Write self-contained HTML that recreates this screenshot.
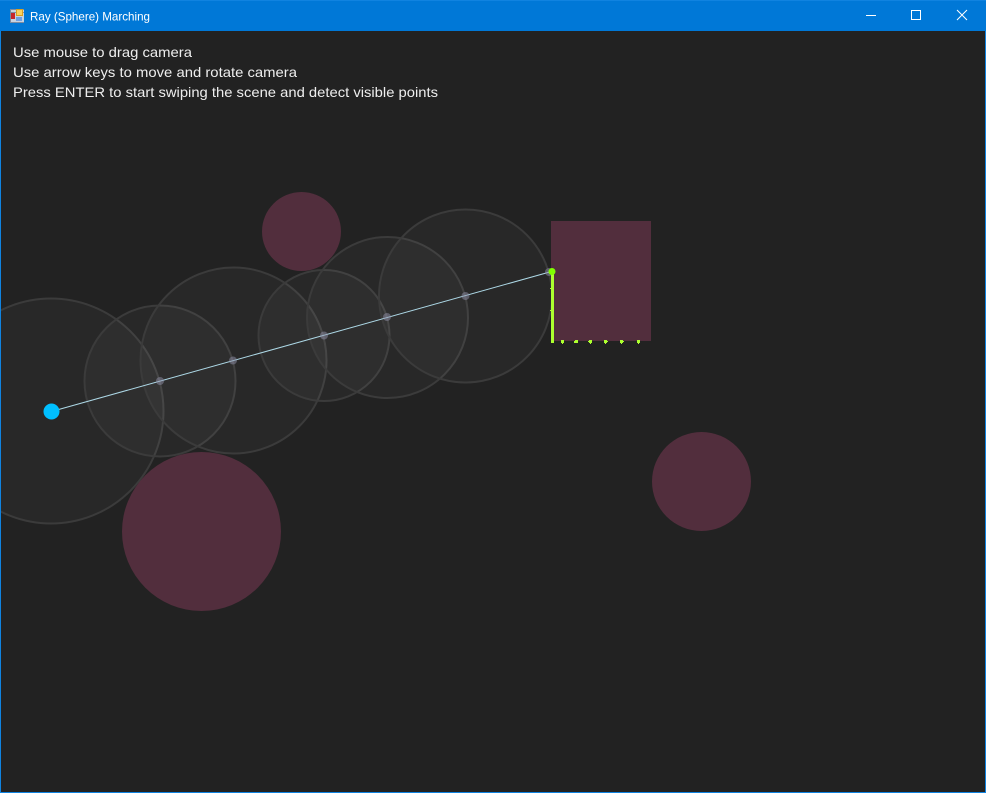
<!DOCTYPE html>
<html><head><meta charset="utf-8"><title>Ray (Sphere) Marching</title>
<style>
html,body{margin:0;padding:0;width:986px;height:793px;overflow:hidden;background:#222}
svg{display:block}
text{font-family:"Liberation Sans",sans-serif}
</style></head>
<body>
<svg width="986" height="793" viewBox="0 0 986 793" xmlns="http://www.w3.org/2000/svg">
<rect width="986" height="793" fill="#1083e0"/>
<rect x="0" y="0" width="986" height="31" fill="#0078d7"/>
<rect x="0" y="0" width="986" height="1" fill="#1083e0"/>
<rect x="1" y="31" width="984" height="761" fill="#222222"/>
<!-- icon -->
<rect x="10" y="9" width="14" height="14" fill="#c6d2e0"/>
<rect x="10" y="9" width="14" height="1" fill="#7d8ba0"/>
<rect x="10" y="9" width="1" height="14" fill="#7d8ba0"/>
<rect x="10" y="12" width="14" height="1" fill="#7d8ba0"/>
<rect x="10" y="22" width="14" height="1" fill="#7d8ba0"/>
<rect x="11" y="13" width="4" height="6" fill="#c8242a"/>
<rect x="16" y="9" width="7" height="7" fill="#d8a020"/>
<rect x="17" y="10" width="5" height="5" fill="#f8d060"/>
<rect x="16" y="17" width="6" height="4" fill="#6f9fe0"/>
<text x="30" y="20.500" font-size="12" fill="#fff" textLength="120" lengthAdjust="spacingAndGlyphs">Ray (Sphere) Marching</text>
<!-- window controls -->
<rect x="866" y="15" width="10" height="1" fill="#fff"/>
<rect x="911.500" y="10.500" width="9" height="9" fill="none" stroke="#fff" stroke-width="1"/>
<path d="M957 10L967 20M967 10L957 20" stroke="#fff" stroke-width="1" fill="none"/>
<!-- text -->
<g font-size="14" fill="#eeeeee">
<text x="13" y="57" textLength="179" lengthAdjust="spacingAndGlyphs">Use mouse to drag camera</text>
<text x="13" y="77" textLength="284" lengthAdjust="spacingAndGlyphs">Use arrow keys to move and rotate camera</text>
<text x="13" y="97" textLength="425" lengthAdjust="spacingAndGlyphs">Press ENTER to start swiping the scene and detect visible points</text>
</g>
<!-- march circles -->
<svg x="1" y="31" width="984" height="761" viewBox="1 31 984 761">
<g fill="#ffffff" fill-opacity="0.03" stroke="#3b3b3b" stroke-width="2">
<circle cx="51" cy="411" r="112.500"/>
<circle cx="160" cy="381" r="75.500"/>
<circle cx="233.500" cy="360.500" r="93"/>
<circle cx="324" cy="335.500" r="65.500"/>
<circle cx="387.500" cy="317.500" r="80.500"/>
<circle cx="465.500" cy="296" r="86.500"/>
</g>
</svg>
<!-- scene -->
<g fill="#522e3d">
<circle cx="301.500" cy="231.500" r="39.500"/>
<circle cx="201.500" cy="531.500" r="79.500"/>
<circle cx="701.500" cy="481.500" r="49.500"/>
<rect x="551" y="221" width="100" height="120"/>
</g>
<!-- ray -->
<line x1="51.500" y1="411.500" x2="551.500" y2="271.500" stroke="#add8e6" stroke-width="1"/>
<g fill="#8f8fa8" fill-opacity="0.5">
<circle cx="160" cy="381" r="4"/>
<circle cx="233" cy="360.500" r="4"/>
<circle cx="324" cy="335.500" r="4"/>
<circle cx="387" cy="317" r="4"/>
<circle cx="465.500" cy="296" r="4"/>
<circle cx="549" cy="272" r="4"/>
</g>
<!-- hits -->
<g fill="#adff2f">
<rect x="551" y="272" width="3" height="71"/>
<rect x="550" y="288" width="1" height="1"/>
<rect x="550" y="310" width="1" height="1"/>
<rect x="561" y="340" width="3" height="3"/><rect x="562" y="343" width="1" height="1"/>
<rect x="575" y="340" width="3" height="3"/><rect x="574" y="341" width="1" height="2"/>
<rect x="589" y="340" width="3" height="3"/><rect x="588" y="341" width="1" height="1"/><rect x="590" y="343" width="1" height="1"/>
<rect x="604" y="340" width="3" height="3"/><rect x="607" y="341" width="1" height="1"/><rect x="605" y="343" width="1" height="1"/>
<rect x="620" y="340" width="3" height="3"/><rect x="623" y="341" width="1" height="1"/><rect x="621" y="343" width="1" height="1"/>
<rect x="637" y="340" width="3" height="3"/><rect x="638" y="343" width="1" height="1"/>
</g>
<circle cx="552" cy="271.500" r="3.500" fill="#7fff00"/>
<circle cx="51.500" cy="411.500" r="8" fill="#00bfff"/>
</svg>
</body></html>
